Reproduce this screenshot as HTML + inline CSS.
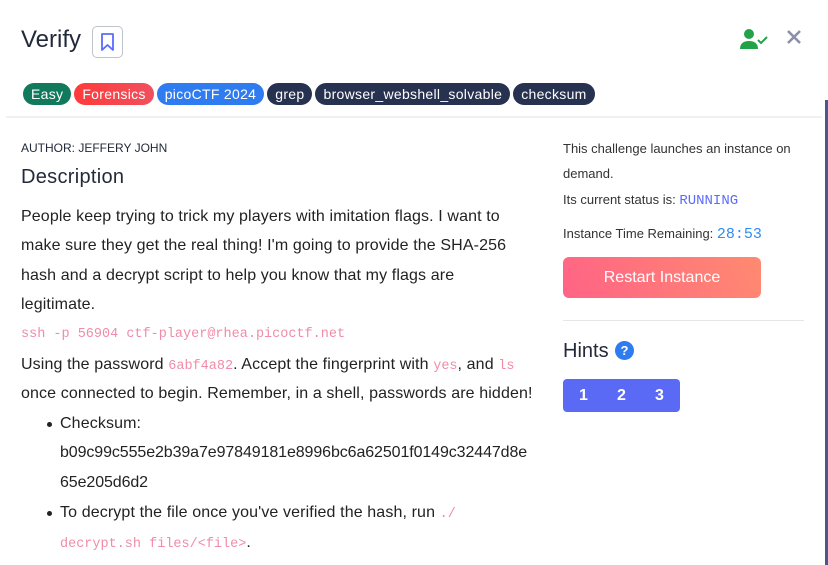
<!DOCTYPE html>
<html><head><meta charset="utf-8"><style>
*{margin:0;padding:0;box-sizing:border-box}
body{width:828px;height:565px;overflow:hidden;background:#fff;font-family:"Liberation Sans",sans-serif;color:#212529;position:relative}
.a{position:absolute;white-space:nowrap}
.t{font-size:16px;letter-spacing:0.12px;color:#222;line-height:20px}
.c{font-family:"Liberation Mono",monospace;color:#f08ca8;font-size:13.5px;letter-spacing:0}
.tag{display:inline-block;height:22px;line-height:22px;border-radius:11px;color:#fff;font-size:14px;padding:0 8px;margin-right:3px;letter-spacing:0.3px}
.s{font-size:13px;color:#333;letter-spacing:0}
</style></head><body>
<div class="a" style="left:21px;top:26px;font-size:24px;color:#222a3a">Verify</div>
<div class="a" style="left:92px;top:26px;width:31px;height:32px;border:1px solid #bfc3cc;border-radius:5px">
<svg width="31" height="32" viewBox="0 0 31 32" style="position:absolute;left:-1px;top:-1px"><path d="M10 8h11v16l-5.5-5-5.5 5z" fill="none" stroke="#5b6bff" stroke-width="1.8" stroke-linejoin="round"/></svg></div>
<svg class="a" style="left:740px;top:27px" width="30" height="24" viewBox="0 0 30 24"><circle cx="9" cy="7" r="5" fill="#22a34a"/><path d="M0 22c0-6 4-8 9-8s9 2 9 8z" fill="#22a34a"/><path d="M18 13l3 3 6-6" fill="none" stroke="#22a34a" stroke-width="2"/></svg>
<svg class="a" style="left:786px;top:29px" width="16" height="16" viewBox="0 0 16 16"><path d="M2 2l12 12M14 2L2 14" stroke="#8a90a6" stroke-width="2.6"/></svg>
<div class="a" style="left:23px;top:83px">
<span class="tag" style="background:#127a5c">Easy</span><span class="tag" style="background:linear-gradient(90deg,#ff3a3a,#f0505e)">Forensics</span><span class="tag" style="background:#2f7cf0">picoCTF 2024</span><span class="tag" style="background:#273150">grep</span><span class="tag" style="background:#273150">browser_webshell_solvable</span><span class="tag" style="background:#273150">checksum</span></div>
<div class="a" style="left:6px;top:116px;width:816px;height:2px;background:#eef0f2"></div>
<div class="a" style="left:825px;top:100px;width:3px;height:465px;background:#4e5490"></div>
<div class="a" style="left:21px;top:141px;font-size:12px;color:#222a3a">AUTHOR: JEFFERY JOHN</div>
<div class="a" style="left:21px;top:166px;font-size:20px;color:#222a3a;letter-spacing:0.3px">Description</div>
<div class="a t" style="left:21px;top:207px">People keep trying to trick my players with imitation flags. I want to</div>
<div class="a t" style="left:21px;top:236px">make sure they get the real thing! I'm going to provide the SHA-256</div>
<div class="a t" style="left:21px;top:266px">hash and a decrypt script to help you know that my flags are</div>
<div class="a t" style="left:21px;top:295px">legitimate.</div>
<div class="a c" style="left:21px;top:327px">ssh -p 56904 ctf-player@rhea.picoctf.net</div>
<div class="a t" style="left:21px;top:355px">Using the password <span class="c">6abf4a82</span>. Accept the fingerprint with <span class="c">yes</span>, and <span class="c">ls</span></div>
<div class="a t" style="left:21px;top:384px">once connected to begin. Remember, in a shell, passwords are hidden!</div>
<div class="a" style="left:47px;top:422px;width:5px;height:5px;border-radius:50%;background:#222"></div>
<div class="a t" style="left:60px;top:414px">Checksum:</div>
<div class="a t" style="left:60px;top:443px;letter-spacing:-0.1px">b09c99c555e2b39a7e97849181e8996bc6a62501f0149c32447d8e</div>
<div class="a t" style="left:60px;top:473px;letter-spacing:-0.1px">65e205d6d2</div>
<div class="a" style="left:47px;top:511px;width:5px;height:5px;border-radius:50%;background:#222"></div>
<div class="a t" style="left:60px;top:503px">To decrypt the file once you've verified the hash, run <span class="c">./</span></div>
<div class="a t" style="left:60px;top:533px"><span class="c">decrypt.sh files/&lt;file&gt;</span>.</div>
<div class="a s" style="left:563px;top:141px">This challenge launches an instance on</div>
<div class="a s" style="left:563px;top:166px">demand.</div>
<div class="a s" style="left:563px;top:192px">Its current status is: <span style="font-family:'Liberation Mono',monospace;color:#5b6bff;font-size:14px">RUNNING</span></div>
<div class="a s" style="left:563px;top:226px">Instance Time Remaining: <span style="font-family:'Liberation Mono',monospace;color:#2f8cf0;font-size:15px">28:53</span></div>
<div class="a" style="left:563px;top:257px;width:198px;height:41px;border-radius:6px;background:linear-gradient(60deg,#ff6386,#ff8a70);color:#fff;font-size:16px;text-align:center;line-height:41px">Restart Instance</div>
<div class="a" style="left:563px;top:320px;width:241px;height:1px;background:#e6e6e6"></div>
<div class="a" style="left:563px;top:340px;font-size:20px;color:#222a3a">Hints</div>
<div class="a" style="left:615px;top:341px;width:19px;height:19px;border-radius:50%;background:#2f7cf0;color:#fff;font-size:13px;font-weight:bold;text-align:center;line-height:19px">?</div>
<div class="a" style="left:563px;top:379px;width:117px;height:33px;border-radius:4px;background:#5b6af5;color:#fff;font-size:16px;font-weight:bold;line-height:33px">
<span style="position:absolute;left:16px">1</span><span style="position:absolute;left:54px">2</span><span style="position:absolute;left:92px">3</span></div>
</body></html>
